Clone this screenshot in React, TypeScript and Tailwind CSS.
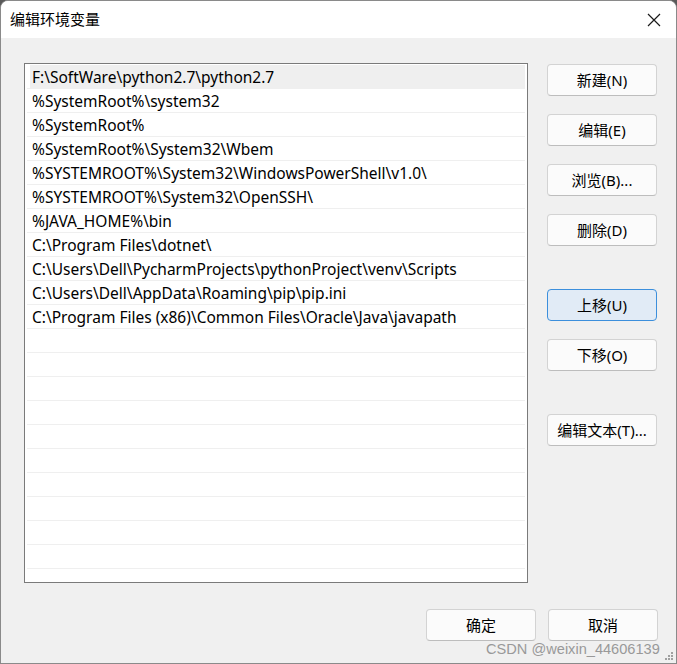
import type React from "react"

const paths = [
  "F:\\SoftWare\\python2.7\\python2.7",
  "%SystemRoot%\\system32",
  "%SystemRoot%",
  "%SystemRoot%\\System32\\Wbem",
  "%SYSTEMROOT%\\System32\\WindowsPowerShell\\v1.0\\",
  "%SYSTEMROOT%\\System32\\OpenSSH\\",
  "%JAVA_HOME%\\bin",
  "C:\\Program Files\\dotnet\\",
  "C:\\Users\\Dell\\PycharmProjects\\pythonProject\\venv\\Scripts",
  "C:\\Users\\Dell\\AppData\\Roaming\\pip\\pip.ini",
  "C:\\Program Files (x86)\\Common Files\\Oracle\\Java\\javapath",
]

const rows = [...paths, ...Array(22 - paths.length).fill("")]

const font = { fontFamily: '"Noto Sans", "Noto Sans CJK SC", sans-serif' }

const Btn: React.FC<{ label: string; active?: boolean; className?: string }> = ({ label, active, className }) => (
  <button
    className={
      "h-[32px] w-[110px] rounded-[4px] border text-[15px] text-black flex items-center justify-center " +
      (active ? "border-[#3c8fdc] bg-[#e1ebf6] " : "border-[#d3d3d3] border-b-[#bdbdbd] bg-[#fbfbfb] ") +
      (className ?? "")
    }
  >
    {label}
  </button>
)

export default function App() {
  return (
    <div className="w-[677px] h-[664px] bg-[#5a5a5a]" style={font}>
      <div className="relative w-full h-full flex flex-col rounded-t-[8px] overflow-hidden border border-[#8a8a8a] bg-[#f0f0f0]">
        <div className="h-[37px] bg-white flex items-center justify-between pl-[9px] pr-[14px]">
          <span className="text-[15px] text-black">编辑环境变量</span>
          <svg width="14" height="14" viewBox="0 0 14 14" className="mr-[1px]">
            <path d="M1 1 L13 13 M13 1 L1 13" stroke="#1a1a1a" strokeWidth="1.2" />
          </svg>
        </div>

        <div className="flex-1 flex flex-col pl-[23px] pt-[25px]">
          <div className="flex">
            <div className="w-[504px] h-[520px] border border-[#7a7a7a] bg-white pt-[1px] px-[2px] overflow-hidden">
              {rows.map((p, i) => (
                <div key={i} className="h-[24px] border-b border-[#efefef] flex">
                  <div
                    className={
                      "flex-1 h-[23px] ml-[3px] flex items-center pl-[2px] pt-[3px] text-[15.5px] text-black whitespace-nowrap " +
                      (i === 0 ? "bg-[#efefef]" : "")
                    }
                  >
                    {p}
                  </div>
                </div>
              ))}
            </div>

            <div className="ml-[19px] pt-[1px] flex flex-col">
              <Btn label="新建(N)" />
              <Btn label="编辑(E)" className="mt-[18px]" />
              <Btn label="浏览(B)..." className="mt-[18px]" />
              <Btn label="删除(D)" className="mt-[18px]" />
              <Btn label="上移(U)" active className="mt-[43px]" />
              <Btn label="下移(O)" className="mt-[18px]" />
              <Btn label="编辑文本(T)..." className="mt-[43px]" />
            </div>
          </div>

          <div className="flex justify-end gap-[12px] mt-[26px] pr-[18px]">
            <Btn label="确定" />
            <Btn label="取消" />
          </div>
        </div>

        <span className="absolute left-[485px] top-[638px] text-[14.6px] text-[#999999]" style={{ fontFamily: '"Liberation Sans", sans-serif' }}>
          CSDN @weixin_44606139
        </span>
        <svg className="absolute right-[2px] bottom-[2px]" width="10" height="10" viewBox="0 0 10 10">
          <rect x="7" y="1" width="2" height="2" fill="#a0a0a0" />
          <rect x="4" y="4" width="2" height="2" fill="#a0a0a0" />
          <rect x="7" y="4" width="2" height="2" fill="#a0a0a0" />
          <rect x="1" y="7" width="2" height="2" fill="#a0a0a0" />
          <rect x="4" y="7" width="2" height="2" fill="#a0a0a0" />
          <rect x="7" y="7" width="2" height="2" fill="#a0a0a0" />
        </svg>
      </div>
    </div>
  )
}
